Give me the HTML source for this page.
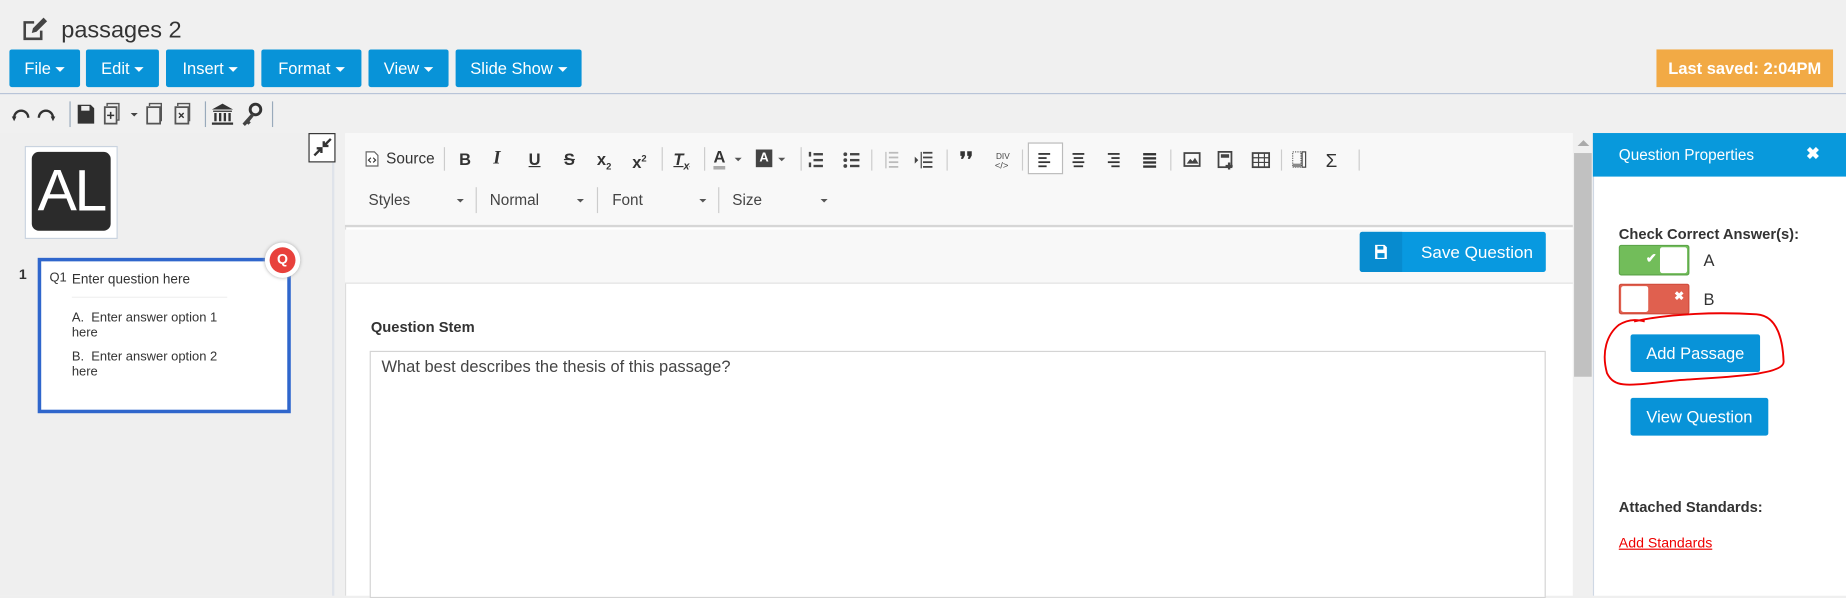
<!DOCTYPE html>
<html><head><meta charset="utf-8"><style>
*{box-sizing:border-box;margin:0;padding:0}
html,body{width:1846px;height:595px;overflow:hidden;background:#efefef;font-family:"Liberation Sans",sans-serif}
#w{position:absolute;left:0;top:0;width:1568px;height:506px;transform:scale(1.17730);transform-origin:0 0;background:#f0f0f0}
.a{position:absolute}
.mb{position:absolute;top:42px;height:32px;background:#0893d8;color:#fff;font-size:14px;line-height:32px;text-align:center;border-radius:2px}
.mb:after{content:"";display:inline-block;margin-left:4px;border-left:4px solid transparent;border-right:4px solid transparent;border-top:4px solid #fff;vertical-align:middle}
.ti{position:absolute;top:126px;font-size:14px;color:#333;font-weight:bold;line-height:18px}
.sep{position:absolute;width:1px;background:#ccc}
.dd{position:absolute;top:162px;font-size:13px;color:#444}
.car{position:absolute;top:169px;border-left:3px solid transparent;border-right:3px solid transparent;border-top:3px solid #555}
</style></head><body><div id="w">
<svg class="a" style="left:18px;top:13px" width="24" height="24" viewBox="0 0 24 24"><path d="M17 13v7H3V6h8" fill="none" stroke="#444" stroke-width="2.2"/><path d="M9 15l1-4 9-9 3 3-9 9z" fill="#444"/></svg>
<div class="a" style="left:52px;top:15px;font-size:20px;color:#333">passages 2</div>
<div class="mb" style="left:8px;width:60px">File</div>
<div class="mb" style="left:73px;width:62px">Edit</div>
<div class="mb" style="left:141px;width:75px">Insert</div>
<div class="mb" style="left:222px;width:85px">Format</div>
<div class="mb" style="left:313px;width:68px">View</div>
<div class="mb" style="left:387px;width:107px">Slide Show</div>
<div class="a" style="left:1407px;top:42px;width:150px;height:32px;background:#f2aa45;color:#fff;font-weight:bold;font-size:14px;line-height:32px;text-align:center">Last saved: 2:04PM</div>
<div class="a" style="left:0;top:79px;width:1568px;height:1px;background:#b8c4d8"></div>
<svg class="a" style="left:8px;top:86px" width="230" height="22" viewBox="0 0 230 22">
<path d="M4 14a6 6 0 0 1 12 0" fill="none" stroke="#333" stroke-width="2"/><path d="M2 13l2 4 2-4z" fill="#333"/>
<path d="M25 14a6 6 0 0 1 12 0" fill="none" stroke="#333" stroke-width="2"/><path d="M35 13l2 4 2-4z" fill="#333"/>
<rect x="51" y="0" width="1" height="22" fill="#9ab"/>
<path d="M58 3h11l3 3v13H58z" fill="#333"/><rect x="61" y="4" width="7" height="4" fill="#eee"/>
<rect x="81" y="5" width="10" height="14" fill="none" stroke="#555" stroke-width="1.5"/><path d="M83 4V2h10v14h-2" fill="none" stroke="#555" stroke-width="1.2"/><path d="M86 9v6M83 12h6" stroke="#333" stroke-width="1.3"/>
<path d="M103 10l3 3 3-3z" fill="#444"/>
<rect x="117" y="5" width="11" height="14" fill="none" stroke="#555" stroke-width="1.5"/><path d="M119 4V2h10v15" fill="none" stroke="#555" stroke-width="1.2"/>
<rect x="141" y="5" width="11" height="14" fill="none" stroke="#555" stroke-width="1.5"/><path d="M143 4V2h10v15" fill="none" stroke="#555" stroke-width="1.2"/><path d="M144 10l4 4M148 10l-4 4" stroke="#333" stroke-width="1.2"/>
<rect x="166" y="0" width="1" height="22" fill="#9ab"/>
<path d="M172 7l9-5 9 5z M173 8h16v1H173z M174 10h2v7h-2zM178 10h2v7h-2zM182 10h2v7h-2zM186 10h2v7h-2z M172 18h18v2h-18z" fill="#333"/>
<circle cx="209" cy="7" r="4.5" fill="none" stroke="#333" stroke-width="2.5"/><path d="M206 10l-8 9 2 2 2-2 1 1 2-2-1-1 4-5" fill="#444"/>
<rect x="223" y="0" width="1" height="22" fill="#9ab"/>
</svg>
<div class="a" style="left:0;top:113px;width:284px;height:393px;background:#efefef;border-right:2px solid #dfe3ea"></div>
<div class="a" style="left:262px;top:113px;width:23px;height:25px;border:1px solid #333;background:#fff"></div>
<svg class="a" style="left:264px;top:115px" width="20" height="20" viewBox="0 0 20 20"><path d="M17 3l-6 6M11 5v4h4M3 17l6-6M9 15v-4H5" stroke="#333" stroke-width="2" fill="none"/></svg>
<div class="a" style="left:21px;top:124px;width:79px;height:79px;border:1px solid #c9d3df;background:#fff"></div>
<div class="a" style="left:27px;top:129px;width:67px;height:67px;background:#2b2b2b;border-radius:6px;color:#fff;font-size:50px;line-height:67px;text-align:center;letter-spacing:-2px">AL</div>
<div class="a" style="left:16px;top:226px;font-size:12px;font-weight:bold;color:#333">1</div>
<div class="a" style="left:32px;top:219px;width:215px;height:132px;border:3px solid #2f66cc;background:#fff"></div>
<div class="a" style="left:42px;top:230px;font-size:11px;color:#333">Q1</div>
<div class="a" style="left:61px;top:232px;font-size:11.5px;color:#333">Enter question here</div>
<div class="a" style="left:61px;top:252px;width:132px;height:1px;background:#f0f0f0"></div>
<div class="a" style="left:61px;top:264px;font-size:11px;color:#333;line-height:13px;width:140px">A.&nbsp; Enter answer option 1<br>here</div>
<div class="a" style="left:61px;top:297px;font-size:11px;color:#333;line-height:13px;width:140px">B.&nbsp; Enter answer option 2<br>here</div>
<div class="a" style="left:225px;top:206px;width:30px;height:30px;border-radius:50%;background:#fff;box-shadow:0 0 3px #aaa"></div>
<div class="a" style="left:229px;top:210px;width:22px;height:22px;border-radius:50%;background:#e8413c;color:#fff;font-size:12px;font-weight:bold;text-align:center;line-height:21px">Q</div>
<div class="a" style="left:293px;top:113px;width:1043px;height:393px;background:#fff;border-left:1px solid #ddd"></div>
<div class="a" style="left:293px;top:113px;width:1043px;height:80px;background:#f8f8f8;border-bottom:2px solid #d6d6d6"></div>
<svg class="a" style="left:310px;top:128px" width="12" height="14" viewBox="0 0 12 14"><path d="M1 1h7l3 3v9H1z" fill="#fff" stroke="#666"/><path d="M5 6L3 8l2 2M7 6l2 2-2 2" stroke="#333" fill="none"/></svg>
<div class="a" style="left:328px;top:127px;font-size:13px;color:#333">Source</div>
<div class="sep" style="left:377px;top:125px;height:20px"></div>
<div class="ti" style="left:390px">B</div>
<div class="ti" style="left:419px;font-style:italic;font-family:'Liberation Serif',serif;font-size:16px">I</div>
<div class="ti" style="left:449px;text-decoration:underline">U</div>
<div class="ti" style="left:479px;text-decoration:line-through">S</div>
<div class="ti" style="left:507px">x<sub style="font-size:8px">2</sub></div>
<div class="ti" style="left:537px">x<sup style="font-size:8px">2</sup></div>
<div class="sep" style="left:562px;top:125px;height:20px"></div>
<div class="ti" style="left:572px;font-style:italic;text-decoration:underline">T<sub style="font-size:9px">x</sub></div>
<div class="sep" style="left:598px;top:125px;height:20px"></div>
<div class="ti" style="left:606px;border-bottom:3px solid #aaa;line-height:15px">A</div><div class="car" style="left:624px;top:134px"></div>
<div class="a" style="left:642px;top:127px;width:14px;height:15px;background:#444;color:#fff;font-size:11px;font-weight:bold;text-align:center;line-height:15px">A</div><div class="car" style="left:661px;top:134px"></div>
<div class="sep" style="left:680px;top:125px;height:20px"></div>
<svg class="a" style="left:686px;top:127px" width="480" height="18" viewBox="0 0 480 18">
<g fill="#444"><rect x="5" y="3" width="8" height="2"/><rect x="5" y="8" width="8" height="2"/><rect x="5" y="13" width="8" height="2"/><rect x="1" y="2" width="2" height="4"/><rect x="1" y="11" width="2" height="4"/>
<rect x="36" y="3" width="8" height="2"/><rect x="36" y="8" width="8" height="2"/><rect x="36" y="13" width="8" height="2"/><circle cx="32" cy="4" r="1.6"/><circle cx="32" cy="9" r="1.6"/><circle cx="32" cy="14" r="1.6"/></g>
<rect x="54" y="0" width="1" height="18" fill="#ccc"/>
<g fill="#bbb"><rect x="69" y="2" width="8" height="1.5"/><rect x="69" y="6" width="8" height="1.5"/><rect x="69" y="10" width="8" height="1.5"/><rect x="69" y="14" width="8" height="1.5"/><rect x="66" y="2" width="1" height="14"/></g>
<g fill="#444"><rect x="98" y="2" width="8" height="1.5"/><rect x="98" y="6" width="8" height="1.5"/><rect x="98" y="10" width="8" height="1.5"/><rect x="98" y="14" width="8" height="1.5"/><rect x="96" y="2" width="1" height="14"/><path d="M91 6l3 3-3 3z"/></g>
<rect x="118" y="0" width="1" height="18" fill="#ccc"/>
<text x="129" y="15" font-size="18" font-weight="bold" fill="#333" font-family="Liberation Serif">❜❜</text>
<text x="160" y="8" font-size="7" fill="#444">DIV</text><text x="159" y="16" font-size="8" fill="#444">&lt;/&gt;</text>
<rect x="182" y="0" width="1" height="18" fill="#ccc"/>
<g fill="#333"><rect x="196" y="3" width="10" height="1.5"/><rect x="196" y="6.5" width="7" height="1.5"/><rect x="196" y="10" width="10" height="1.5"/><rect x="196" y="13.5" width="7" height="1.5"/>
<rect x="225" y="3" width="10" height="1.5"/><rect x="226" y="6.5" width="8" height="1.5"/><rect x="225" y="10" width="10" height="1.5"/><rect x="226" y="13.5" width="8" height="1.5"/>
<rect x="255" y="3" width="10" height="1.5"/><rect x="258" y="6.5" width="7" height="1.5"/><rect x="255" y="10" width="10" height="1.5"/><rect x="258" y="13.5" width="7" height="1.5"/>
<rect x="285" y="3" width="11" height="2"/><rect x="285" y="6.5" width="11" height="2"/><rect x="285" y="10" width="11" height="2"/><rect x="285" y="13.5" width="11" height="2"/></g>
<rect x="308" y="0" width="1" height="18" fill="#ccc"/>
<rect x="320" y="3" width="13" height="11" fill="none" stroke="#444" stroke-width="1.5"/><path d="M322 12l3-4 2 2 2-3 3 5z" fill="#444"/>
<rect x="349" y="2" width="11" height="13" fill="none" stroke="#444" stroke-width="1.5"/><rect x="351" y="4" width="7" height="3" fill="#444"/><path d="M358 11v6M355 14h6" stroke="#444" stroke-width="2"/>
<rect x="378" y="3" width="14" height="12" fill="none" stroke="#444" stroke-width="1.5"/><path d="M378 7h14M378 11h14M383 3v12M388 3v12" stroke="#444"/>
<rect x="402" y="0" width="1" height="18" fill="#ccc"/>
<rect x="412" y="2" width="7" height="13" fill="none" stroke="#666" stroke-dasharray="1 1"/><rect x="420" y="2" width="3" height="13" fill="none" stroke="#444"/><rect x="412" y="12" width="7" height="3" fill="#888"/>
<text x="440" y="15" font-size="16" fill="#333">Σ</text>
<rect x="468" y="0" width="1" height="18" fill="#ccc"/>
</svg>
<div class="a" style="left:873px;top:121px;width:30px;height:27px;border:1px solid #bbb;background:#fff"></div>
<svg class="a" style="left:881px;top:130px" width="12" height="14"><g fill="#333"><rect x="1" y="0" width="10" height="1.5"/><rect x="1" y="3.5" width="7" height="1.5"/><rect x="1" y="7" width="10" height="1.5"/><rect x="1" y="10.5" width="7" height="1.5"/></g></svg>
<div class="dd" style="left:313px">Styles</div><div class="car" style="left:388px"></div><div class="sep" style="left:404px;top:159px;height:22px"></div>
<div class="dd" style="left:416px">Normal</div><div class="car" style="left:490px"></div><div class="sep" style="left:507px;top:159px;height:22px"></div>
<div class="dd" style="left:520px">Font</div><div class="car" style="left:594px"></div><div class="sep" style="left:610px;top:159px;height:22px"></div>
<div class="dd" style="left:622px">Size</div><div class="car" style="left:697px"></div>
<div class="a" style="left:293px;top:195px;width:1043px;height:46px;background:#f8f8f8;border-bottom:1px solid #e2e2e2"></div>
<div class="a" style="left:1155px;top:197px;width:158px;height:34px;background:#0899e0;border-radius:2px"></div>
<div class="a" style="left:1155px;top:197px;width:36px;height:34px;background:#078bcf;border-radius:2px 0 0 2px"></div>
<svg class="a" style="left:1167px;top:207px" width="12" height="14"><path d="M1 1h8l2 2v10H1z" fill="#fff"/><rect x="3" y="2" width="5" height="3" fill="#078bcf"/><rect x="3" y="8" width="6" height="4" fill="#078bcf"/></svg>
<div class="a" style="left:1207px;top:207px;font-size:14.5px;color:#fff">Save Question</div>
<div class="a" style="left:315px;top:271px;font-size:12.5px;font-weight:bold;color:#333">Question Stem</div>
<div class="a" style="left:314px;top:298px;width:999px;height:210px;border:1px solid #d4d4d4;background:#fff"></div>
<div class="a" style="left:324px;top:303px;font-size:14px;color:#444">What best describes the thesis of this passage?</div>
<div class="a" style="left:1336px;top:113px;width:17px;height:393px;background:#f0f0f0"></div>
<div class="a" style="left:1340px;top:119px;border-left:5px solid transparent;border-right:5px solid transparent;border-bottom:5px solid #aaa"></div>
<div class="a" style="left:1337px;top:130px;width:15px;height:190px;background:#c1c1c1"></div>
<div class="a" style="left:1353px;top:113px;width:215px;height:393px;background:#fff;border-left:1px solid #cfd8e4"></div>
<div class="a" style="left:1353px;top:113px;width:215px;height:37px;background:#0899dc"></div>
<div class="a" style="left:1375px;top:124px;font-size:13px;color:#fff">Question Properties</div>
<div class="a" style="left:1534px;top:122px;font-size:14px;color:#fff;font-weight:bold">✖</div>
<div class="a" style="left:1375px;top:192px;font-size:12.5px;font-weight:bold;color:#333">Check Correct Answer(s):</div>
<div class="a" style="left:1375px;top:208px;width:60px;height:26px;background:#72bd5a;border:1px solid #5da54a;border-radius:2px"></div>
<div class="a" style="left:1410px;top:210px;width:23px;height:22px;background:#fff;border-radius:2px"></div>
<div class="a" style="left:1398px;top:213px;font-size:11px;color:#fff;font-weight:bold">✔</div>
<div class="a" style="left:1447px;top:213px;font-size:14px;color:#333">A</div>
<div class="a" style="left:1375px;top:241px;width:60px;height:26px;background:#e0604f;border:1px solid #d14c3c;border-radius:2px"></div>
<div class="a" style="left:1377px;top:243px;width:23px;height:22px;background:#fff;border-radius:2px"></div>
<div class="a" style="left:1422px;top:247px;font-size:10px;color:#fff;font-weight:bold">✖</div>
<div class="a" style="left:1447px;top:246px;font-size:14px;color:#333">B</div>
<svg class="a" style="left:1360px;top:264px" width="160" height="70" viewBox="0 0 160 70"><path d="M28 9C60 2 100 1 132 3c15 1 22 16 23 40 1 12-50 13-90 16-40 4-53 8-60-6C0 35 5 20 15 12c10-6 18-4 22-3" fill="none" stroke="#e00" stroke-width="1.6"/></svg>
<div class="a" style="left:1385px;top:284px;width:110px;height:32px;background:#0893d8;border-radius:2px;color:#fff;font-size:14px;text-align:center;line-height:32px">Add Passage</div>
<div class="a" style="left:1385px;top:338px;width:117px;height:32px;background:#0893d8;border-radius:2px;color:#fff;font-size:14px;text-align:center;line-height:32px">View Question</div>
<div class="a" style="left:1375px;top:424px;font-size:12.5px;font-weight:bold;color:#333">Attached Standards:</div>
<div class="a" style="left:1375px;top:454px;font-size:12px;color:#e00;text-decoration:underline">Add Standards</div>
</div></body></html>
